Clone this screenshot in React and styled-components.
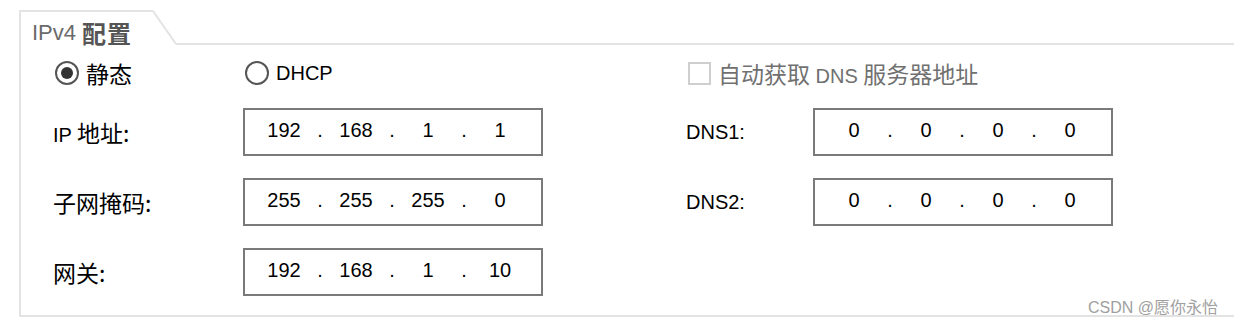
import React from "react";
import styled, { createGlobalStyle } from "styled-components";

const GlobalStyle = createGlobalStyle`
  html, body {
    margin: 0;
    padding: 0;
    background: #ffffff;
    overflow: hidden;
  }
  body {
    font-family: "Liberation Sans", "Noto Sans CJK SC", sans-serif;
    color: #000;
  }
`;

const LINE = "#e3e3e3";

const SPage = styled.div`
  position: relative;
  width: 1234px;
  height: 326px;
  padding-top: 10px;
  padding-left: 19px;
  box-sizing: border-box;
`;

const SPanel = styled.div`
  border-left: 2px solid ${LINE};
  border-bottom: 2px solid ${LINE};
  width: 1213px;
`;

const SHeader = styled.div`
  display: flex;
  height: 35px;
`;

const STab = styled.div`
  width: 132px;
  border-top: 2px solid ${LINE};
  padding: 8px 0 0 11px;
  box-sizing: border-box;
  display: flex;
  align-items: center;
  white-space: nowrap;
`;

const STitleLatin = styled.span`
  font-size: 22px;
  color: #6a6a6a;
  margin-right: 6px;
`;

const STitleHan = styled.span`
  font-family: "Noto Sans CJK SC", sans-serif;
  font-size: 24px;
  font-weight: 700;
  color: #555;
  letter-spacing: 1px;
`;

const SSlant = styled.svg`
  display: block;
  flex: none;
`;

const SFiller = styled.div`
  flex: 1;
  border-bottom: 2px solid ${LINE};
`;

const SBody = styled.div`
  display: grid;
  grid-template-columns: 190px 300px 143px 127px 300px;
  grid-template-rows: 26px 48px 48px 48px;
  row-gap: 22px;
  align-items: center;
  padding: 15px 0 19px 32px;
`;

const SText = styled.span`
  font-size: 20px;
  color: ${(p) => (p.$muted ? "#707070" : "#000")};
  white-space: nowrap;
`;

const SHan = styled.span`
  font-family: "Noto Sans CJK SC", sans-serif;
  font-size: 23px;
`;

const SOption = styled.label`
  display: flex;
  align-items: center;
  gap: 7px;
  grid-column: ${(p) => p.$col || "auto"};
`;

const SRadio = styled.span`
  width: 24px;
  height: 24px;
  margin-left: 2px;
  border-radius: 50%;
  border: 2px solid #555;
  box-sizing: border-box;
  display: flex;
  align-items: center;
  justify-content: center;
  &::after {
    content: "";
    width: 12px;
    height: 12px;
    border-radius: 50%;
    background: ${(p) => (p.$checked ? "#333" : "transparent")};
  }
`;

const SCheck = styled.span`
  width: 23px;
  height: 23px;
  margin-left: 2px;
  border: 2px solid #cfcfcf;
  box-sizing: border-box;
  background: #fff;
`;

const SLabel = styled.div`
  display: flex;
  align-items: center;
  grid-column: ${(p) => p.$col || "auto"};
`;

const SIpBox = styled.div`
  width: 300px;
  height: 48px;
  box-sizing: border-box;
  border: 2px solid #7a7a7a;
  padding: 0 0 3px 21px;
  display: flex;
  align-items: center;
  font-size: 20px;
  grid-column: ${(p) => p.$col || "auto"};
`;

const SOctet = styled.span`
  width: 36px;
  text-align: center;
`;

const SWatermark = styled.div`
  position: absolute;
  right: 16px;
  bottom: 8px;
  font-size: 16px;
  color: #a0a0a0;
  font-family: "Liberation Sans", "Noto Sans CJK SC", sans-serif;
`;

function IpField({ value, col }) {
  const parts = value.split(".");
  const cells = [];
  parts.forEach((p, i) => {
    if (i > 0) cells.push(<SOctet key={"d" + i}>.</SOctet>);
    cells.push(<SOctet key={"o" + i}>{p}</SOctet>);
  });
  return <SIpBox $col={col}>{cells}</SIpBox>;
}

export default function App() {
  return (
    <SPage>
      <GlobalStyle />
      <SPanel>
        <SHeader>
          <STab>
            <STitleLatin>IPv4</STitleLatin>
            <STitleHan>配置</STitleHan>
          </STab>
          <SSlant width="23" height="35" viewBox="0 0 23 35">
            <line x1="0" y1="1" x2="23" y2="34" stroke={LINE} strokeWidth="2" />
          </SSlant>
          <SFiller />
        </SHeader>
        <SBody>
          <SOption $col="1">
            <SRadio $checked />
            <SText>
              <SHan>静态</SHan>
            </SText>
          </SOption>
          <SOption $col="2">
            <SRadio />
            <SText>DHCP</SText>
          </SOption>
          <SOption $col="4 / 6">
            <SCheck />
            <SText $muted>
              <SHan>自动获取</SHan> DNS <SHan>服务器地址</SHan>
            </SText>
          </SOption>

          <SLabel $col="1">
            <SText>
              IP <SHan>地址:</SHan>
            </SText>
          </SLabel>
          <IpField value="192.168.1.1" col="2" />
          <SLabel $col="4">
            <SText>DNS1:</SText>
          </SLabel>
          <IpField value="0.0.0.0" col="5" />

          <SLabel $col="1">
            <SText>
              <SHan>子网掩码:</SHan>
            </SText>
          </SLabel>
          <IpField value="255.255.255.0" col="2" />
          <SLabel $col="4">
            <SText>DNS2:</SText>
          </SLabel>
          <IpField value="0.0.0.0" col="5" />

          <SLabel $col="1">
            <SText>
              <SHan>网关:</SHan>
            </SText>
          </SLabel>
          <IpField value="192.168.1.10" col="2" />
        </SBody>
      </SPanel>
      <SWatermark>CSDN @愿你永怡</SWatermark>
    </SPage>
  );
}
